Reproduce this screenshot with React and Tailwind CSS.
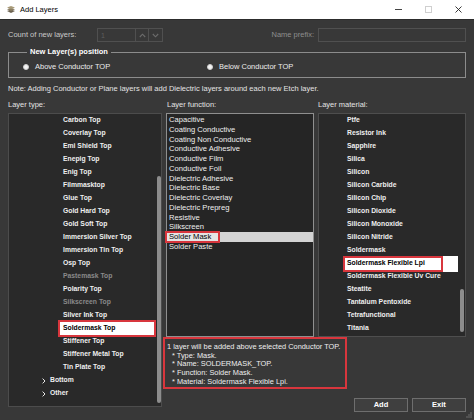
import React from "react";

const TYPE = [
  "Carbon Top", "Coverlay Top", "Emi Shield Top", "Enepig Top", "Enig Top", "Filmmasktop", "Glue Top",
  "Gold Hard Top", "Gold Soft Top", "Immersion Silver Top", "Immersion Tin Top", "Osp Top", "Pastemask Top",
  "Polarity Top", "Silkscreen Top", "Silver Ink Top", "Soldermask Top", "Stiffener Top", "Stiffener Metal Top",
  "Tin Plate Top",
];
const DISABLED = new Set(["Pastemask Top", "Silkscreen Top"]);
const FUNCS = [
  "Capacitive", "Coating Conductive", "Coating Non Conductive", "Conductive Adhesive", "Conductive Film",
  "Conductive Foil", "Dielectric Adhesive", "Dielectric Base", "Dielectric Coverlay", "Dielectric Prepreg",
  "Resistive", "Silkscreen", "Solder Mask", "Solder Paste",
];
const MATS = [
  "Ptfe", "Resistor Ink", "Sapphire", "Silica", "Silicon", "Silicon Carbide", "Silicon Chip", "Silicon Dioxide",
  "Silicon Monoxide", "Silicon Nitride", "Soldermask", "Soldermask Flexible Lpi", "Soldermask Flexible Uv Cure",
  "Steatite", "Tantalum Pentoxide", "Tetrafunctional", "Titania",
];

function Chevron({ dir }) {
  return (
    <svg width="7" height="5" viewBox="0 0 7 5" className="block">
      {dir === "up" ? (
        <polyline points="0.8,4 3.5,1.2 6.2,4" fill="none" stroke="#6c6c6c" strokeWidth="1.1" />
      ) : (
        <polyline points="0.8,1 3.5,3.8 6.2,1" fill="none" stroke="#6c6c6c" strokeWidth="1.1" />
      )}
    </svg>
  );
}

function Radio({ label }) {
  return (
    <div className="flex items-center">
      <span className="w-[6px] h-[6px] rounded-full bg-[#f4f4f4] border border-[#cfcfcf]" />
      <span className="ml-[6px] text-[7.5px] text-[#ececec]">{label}</span>
    </div>
  );
}

export default function App() {
  return (
    <div className="w-[474px] h-[420px] bg-[#383838] flex flex-col overflow-hidden text-[#ececec] font-['Liberation_Sans',Arial,sans-serif] leading-none">
      {/* Title bar */}
      <div className="h-[20px] shrink-0 bg-white flex items-center border-b border-[#2c2c2c]">
        <svg width="10" height="9" viewBox="0 0 10 9" className="ml-[6px]">
          <polygon points="1,6 5,4.5 9,6 5,8" fill="#6b6250" />
          <polygon points="1,4.2 5,2.7 9,4.2 5,5.9" fill="#8a7d62" />
          <polygon points="1,2.5 5,1 9,2.5 5,4.1" fill="#a89a78" />
        </svg>
        <span className="ml-[4px] text-[7.5px] text-black">Add Layers</span>
        <div className="ml-auto flex items-center">
          <div className="w-[7px] h-px bg-[#444]" />
          <div className="ml-[23px] w-[7px] h-[7px] border border-[#cfcfcf]" />
          <svg width="7" height="7" viewBox="0 0 7 7" className="ml-[23px] mr-[12px]">
            <path d="M0.5 0.5 L6.5 6.5 M6.5 0.5 L0.5 6.5" stroke="#222" strokeWidth="0.9" />
          </svg>
        </div>
      </div>

      <div className="flex-1 flex flex-col px-[8px] relative">
        {/* count row */}
        <div className="mt-[8px] h-[14px] flex items-center">
          <span className="w-[89px] text-[7.5px] text-[#c9c9c9]">Count of new layers:</span>
          <div className="flex h-[14px] border border-[#505050]">
            <div className="w-[37px] flex items-center pl-[3px] text-[7px] text-[#5e5e5e]">1</div>
            <div className="w-[13px] border-l border-[#505050] flex items-center justify-center">
              <Chevron dir="up" />
            </div>
            <div className="w-[14px] border-l border-[#505050] flex items-center justify-center">
              <Chevron dir="down" />
            </div>
          </div>
          <span className="ml-auto text-[7.5px] text-[#8e8e8e]">Name prefix:</span>
          <div className="ml-[4px] w-[148px] h-[14px] border border-[#505050]" />
        </div>

        {/* group box */}
        <fieldset className="mt-[5px] border border-[#8c8c8c] h-[31px] px-[14px]">
          <legend className="ml-[4px] px-[3px] text-[7.5px] font-bold text-white leading-[10px]">
            New Layer(s) position
          </legend>
          <div className="h-[20px] flex items-center">
            <div className="w-[184px]">
              <Radio label="Above Conductor TOP" />
            </div>
            <Radio label="Below Conductor TOP" />
          </div>
        </fieldset>

        <div className="mt-[6px] h-[10px] flex items-center text-[7.5px] text-[#e4e4e4]">
          Note: Adding Conductor or Plane layers will add Dielectric layers around each new Etch layer.
        </div>

        {/* columns */}
        <div className="mt-[6px] flex">
          {/* Layer type */}
          <div className="w-[154px] flex flex-col">
            <div className="h-[10px] flex items-center text-[7.5px] text-[#e4e4e4]">Layer type:</div>
            <div className="mt-[3px] h-[294px] bg-[#292929] border border-[#4c4c4c] flex">
              <div className="flex-1 flex flex-col text-[6.8px] font-bold">
                {TYPE.map((t) =>
                  t === "Soldermask Top" ? (
                    <div key={t} className="h-[13px] flex items-center pl-[49px]">
                      <div className="relative z-10 h-[17px] w-[98px] shrink-0 bg-white border-2 border-[#d8363d] flex items-center pl-[3px] text-black">
                        {t}
                      </div>
                    </div>
                  ) : (
                    <div
                      key={t}
                      className={`h-[13px] flex items-center pl-[54px] ${DISABLED.has(t) ? "text-[#8a8a8a]" : "text-[#efefef]"}`}
                    >
                      {t}
                    </div>
                  )
                )}
                {["Bottom", "Other"].map((t) => (
                  <div key={t} className="h-[13px] flex items-center pl-[33px] text-[#efefef]">
                    <svg width="4" height="6" viewBox="0 0 4 6" className="mr-[4px]">
                      <polyline points="0.6,0.6 3,3 0.6,5.4" fill="none" stroke="#e8e8e8" strokeWidth="1" />
                    </svg>
                    {t}
                  </div>
                ))}
              </div>
              <div className="w-[7px] pt-[62px] pb-[3px] flex justify-center">
                <div className="w-[4px] h-full rounded-full bg-[#8d8d8d]" />
              </div>
            </div>
          </div>

          {/* right part */}
          <div className="ml-[4px] w-[300px] flex flex-col">
            <div className="flex">
              <div className="w-[148px] flex flex-col">
                <div className="h-[10px] flex items-center text-[7.5px] text-[#e4e4e4] pl-[1px]">Layer function:</div>
                <div className="mt-[3px] h-[224px] bg-[#252525] border border-[#8f8f8f] flex flex-col text-[7.6px] pt-px">
                  {FUNCS.map((f) =>
                    f === "Solder Mask" ? (
                      <div key={f} className="h-[9.75px] shrink-0 flex items-center bg-[#d3d3d3] pl-[2px]">
                        <div className="-ml-[4px] h-[12px] w-[55px] shrink-0 border-2 border-[#d8363d] bg-[#e4e4e4] flex items-center pl-[2px] text-black">
                          {f}
                        </div>
                      </div>
                    ) : (
                      <div key={f} className="h-[9.75px] shrink-0 flex items-center pl-[2px] text-[#efefef]">
                        {f}
                      </div>
                    )
                  )}
                </div>
              </div>
              <div className="ml-[4px] w-[148px] flex flex-col">
                <div className="h-[10px] flex items-center text-[7.5px] text-[#e4e4e4]">Layer material:</div>
                <div className="mt-[3px] h-[224px] bg-[#292929] border border-[#4e4e4e] flex">
                  <div className="flex-1 flex flex-col text-[6.8px] font-bold">
                    {MATS.map((m) =>
                      m === "Soldermask Flexible Lpi" ? (
                        <div key={m} className="h-[13px] shrink-0 flex items-center pl-[24px]">
                          <div className="h-[16px] w-[115px] shrink-0 bg-white flex">
                            <div className="h-full w-[100px] border-2 border-[#d8363d] flex items-center pl-[2px] text-black">
                              {m}
                            </div>
                          </div>
                        </div>
                      ) : (
                        <div key={m} className="h-[13px] shrink-0 flex items-center pl-[28px] text-[#efefef]">
                          {m}
                        </div>
                      )
                    )}
                  </div>
                  <div className="w-[7px] pt-[175px] pb-[5px] flex justify-center">
                    <div className="w-[4px] h-[43px] rounded-full bg-[#8d8d8d]" />
                  </div>
                </div>
              </div>
            </div>

            {/* info box */}
            <div className="-ml-[3px] w-[184px] h-[52px] border-2 border-[#d8363d] pl-[2px] pt-[4px] text-[7.4px] text-[#efefef] leading-[8.7px]">
              <div>1 layer will be added above selected Conductor TOP.</div>
              <div className="pl-[5px]">* Type: Mask.</div>
              <div className="pl-[5px]">* Name: SOLDERMASK_TOP.</div>
              <div className="pl-[5px]">* Function: Solder Mask.</div>
              <div className="pl-[5px]">* Material: Soldermask Flexible Lpi.</div>
            </div>

            {/* buttons */}
            <div className="mt-[9px] flex justify-end gap-[4px]">
              <button className="w-[54px] h-[14px] bg-[#3f3f3f] border border-[#6e6e6e] text-[7.5px] font-bold text-white flex items-center justify-center">
                Add
              </button>
              <button className="w-[54px] h-[14px] bg-[#3f3f3f] border border-[#6e6e6e] text-[7.5px] font-bold text-white flex items-center justify-center">
                Exit
              </button>
            </div>
          </div>
        </div>

        <svg width="6" height="6" viewBox="0 0 6 6" className="absolute right-[2px] bottom-[2px]">
          <rect x="4.5" y="0.5" width="1" height="1" fill="#9a9a9a" />
          <rect x="2.5" y="2.5" width="1" height="1" fill="#9a9a9a" />
          <rect x="4.5" y="2.5" width="1" height="1" fill="#9a9a9a" />
          <rect x="0.5" y="4.5" width="1" height="1" fill="#9a9a9a" />
          <rect x="2.5" y="4.5" width="1" height="1" fill="#9a9a9a" />
          <rect x="4.5" y="4.5" width="1" height="1" fill="#9a9a9a" />
        </svg>
      </div>
    </div>
  );
}
